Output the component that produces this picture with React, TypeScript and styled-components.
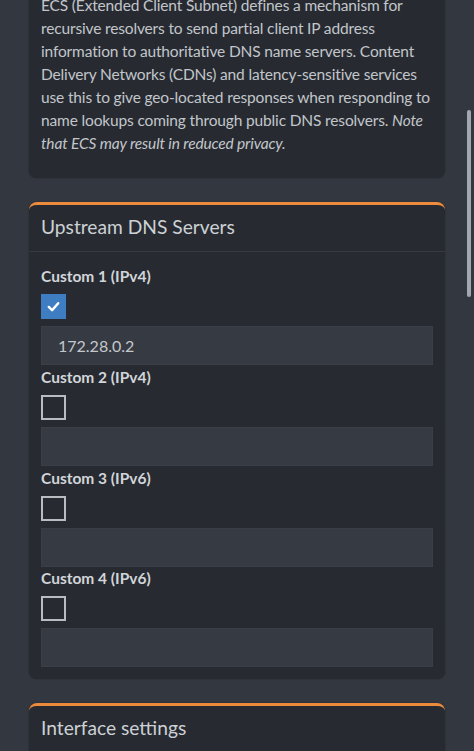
import { createGlobalStyle, styled } from 'styled-components'

const GlobalStyle = createGlobalStyle`
  html, body {
    margin: 0;
    padding: 0;
    background: #333840;
    overflow: hidden;
  }

  body {
    font-family: Lato, 'Noto Sans', sans-serif;
    color: #c2c6cb;
  }
`

type ServerField = {
  label: string
  checked: boolean
  value: string
}

const servers: ServerField[] = [
  { label: 'Custom 1 (IPv4)', checked: true, value: '172.28.0.2' },
  { label: 'Custom 2 (IPv4)', checked: false, value: '' },
  { label: 'Custom 3 (IPv6)', checked: false, value: '' },
  { label: 'Custom 4 (IPv6)', checked: false, value: '' },
]

function CheckMark() {
  return (
    <svg width="15" height="15" viewBox="0 0 16 16" fill="none">
      <polyline
        points="3,8.5 6.5,12 13,4.5"
        stroke="#fff"
        strokeWidth="2.6"
        strokeLinecap="round"
        strokeLinejoin="round"
      />
    </svg>
  )
}

export default function App() {
  return (
    <>
      <GlobalStyle />
      <Page>
        <Card $clipped>
          <Body $text>
            <Paragraph>
              ECS (Extended Client Subnet) defines a mechanism for recursive
              resolvers to send partial client IP address information to
              authoritative DNS name servers. Content Delivery Networks (CDNs)
              and latency-sensitive services use this to give geo-located
              responses when responding to name lookups coming through public
              DNS resolvers. <em>Note that ECS may result in reduced privacy.</em>
            </Paragraph>
          </Body>
        </Card>

        <Card $accent>
          <Header>
            <Title>Upstream DNS Servers</Title>
          </Header>
          <Body>
            {servers.map(({ label, checked, value }) => (
              <Field key={label}>
                <Label>{label}</Label>
                <Checkbox $checked={checked}>{checked && <CheckMark />}</Checkbox>
                <TextInput>{value}</TextInput>
              </Field>
            ))}
          </Body>
        </Card>

        <Card $accent>
          <Header>
            <Title>Interface settings</Title>
          </Header>
          <Body>
            <Spacer />
          </Body>
        </Card>
      </Page>
      <ScrollThumb />
    </>
  )
}

const Page = styled.div`
  display: flex;
  flex-direction: column;
  gap: 24px;
  padding: 0 29px 40px;
`

const Card = styled.section<{ $accent?: boolean; $clipped?: boolean }>`
  background: #272b31;
  border-radius: 8px;
  box-shadow: 0 0 2px rgba(0, 0, 0, 0.35);
  border-top: ${({ $accent }) => ($accent ? '3px solid #ec8b3c' : 'none')};
  margin-top: ${({ $clipped }) => ($clipped ? '-18px' : '0')};
`

const Header = styled.div`
  padding: 10px 12px 12px;
  border-bottom: 1px solid #363b42;
`

const Title = styled.h3`
  margin: 0;
  font-size: 19.2px;
  line-height: 24px;
  font-weight: 400;
  color: #cdd1d5;
`

const Body = styled.div<{ $text?: boolean }>`
  padding: ${({ $text }) => ($text ? '12px 12px 23px' : '14px 12px 12px')};
  display: flex;
  flex-direction: column;
  gap: 1.8px;
`

const Paragraph = styled.p`
  margin: 0;
  font-size: 15.5px;
  letter-spacing: -0.15px;
  line-height: 23px;
  color: #c2c6cb;

  em {
    font-style: italic;
  }
`

const Field = styled.div`
  display: flex;
  flex-direction: column;
  align-items: flex-start;
`

const Label = styled.label`
  font-size: 15.5px;
  line-height: 20px;
  font-weight: 700;
  color: #d2d5d9;
  margin-bottom: 8px;
`

const Checkbox = styled.span<{ $checked: boolean }>`
  box-sizing: border-box;
  width: 25px;
  height: 25px;
  display: flex;
  align-items: center;
  justify-content: center;
  background: ${({ $checked }) => ($checked ? '#3f7dc2' : 'transparent')};
  border: ${({ $checked }) => ($checked ? 'none' : '2px solid #b9bdc2')};
  margin-bottom: 7px;
`

const TextInput = styled.div`
  box-sizing: border-box;
  align-self: stretch;
  height: 39px;
  padding: 0 16px;
  display: flex;
  align-items: center;
  background: #363a42;
  border: 1px solid #3a3f47;
  font-size: 16px;
  color: #c4c8cc;
`

const Spacer = styled.div`
  height: 60px;
`

const ScrollThumb = styled.div`
  position: fixed;
  top: 110px;
  right: 3px;
  width: 4px;
  height: 187px;
  border-radius: 2px;
  background: #a3a8ae;
`
